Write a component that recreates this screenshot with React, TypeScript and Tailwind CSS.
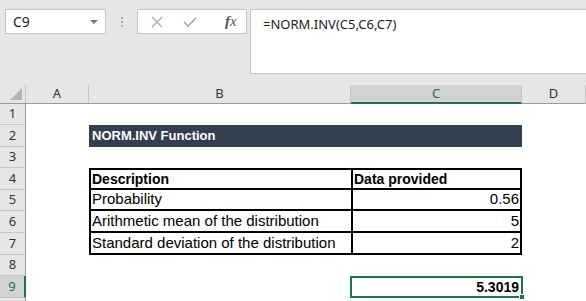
import React from "react";

const cellFont = { fontFamily: '"Liberation Sans", Arial, sans-serif' };

function RowHead({ n, active }: { n?: number; active?: boolean }) {
  return (
    <div
      className={
        active
          ? "w-[26px] shrink-0 flex items-center justify-center bg-[#d2d2d2] text-[#217346] border-b border-[#c6c6c6] border-r-2 border-r-[#217346] text-[13px]"
          : "w-[26px] shrink-0 flex items-center justify-center bg-[#e6e6e6] text-[#333] border-b border-[#c6c6c6] border-r border-r-[#9b9b9b] text-[13px]"
      }
      style={{ fontFamily: '"Noto Sans", sans-serif' }}
    >
      {n}
    </div>
  );
}

export default function App() {
  return (
    <div className="w-[586px] h-[301px] overflow-hidden bg-white" style={cellFont}>
      {/* formula bar area */}
      <div className="h-[85px] bg-[#e6e6e6] flex items-start pt-[9px] pl-[5px]">
        <div className="w-[101px] h-[25px] bg-white border border-[#c6c6c6] flex items-center justify-between pl-[7px] pr-[7px]">
          <span className="text-[14px] text-[#222]" style={{ fontFamily: '"Noto Sans", sans-serif' }}>
            C9
          </span>
          <span className="w-0 h-0 border-l-[4px] border-r-[4px] border-t-[4px] border-l-transparent border-r-transparent border-t-[#777]" />
        </div>
        <div className="w-[31px] h-[25px] flex flex-col items-center justify-center gap-[2px]">
          <span className="w-[2px] h-[2px] bg-[#aaa]" />
          <span className="w-[2px] h-[2px] bg-[#aaa]" />
          <span className="w-[2px] h-[2px] bg-[#aaa]" />
        </div>
        <div className="w-[110px] h-[25px] bg-white border border-[#c6c6c6] flex items-center pl-[13px] gap-[20px]">
          <svg width="12" height="12" viewBox="0 0 12 12">
            <path d="M1 1 L11 11 M11 1 L1 11" stroke="#a6a6a6" strokeWidth="1.3" fill="none" />
          </svg>
          <svg width="14" height="12" viewBox="0 0 14 12">
            <path d="M1 6 L5 10 L13 2" stroke="#a6a6a6" strokeWidth="1.6" fill="none" />
          </svg>
          <span
            className="text-[15px] italic text-[#555] ml-[8px] leading-none"
            style={{ fontFamily: '"Liberation Serif", serif' }}
          >
            <span className="font-bold">f</span>x
          </span>
        </div>
        <div className="ml-[3px] flex-1 h-[65px] bg-white border border-r-0 border-[#c6c6c6] pl-[12px] pt-[2px]">
          <span className="text-[13px] text-[#222]" style={{ fontFamily: '"Noto Sans", sans-serif' }}>
            =NORM.INV(C5,C6,C7)
          </span>
        </div>
      </div>

      {/* column headers */}
      <div
        className="flex h-[19px] bg-[#e6e6e6] border-b border-[#9b9b9b] text-[13px] text-[#333]"
        style={{ fontFamily: '"Noto Sans", sans-serif' }}
      >
        <div className="w-[26px] border-r border-[#c6c6c6] relative">
          <svg className="absolute left-[10px] top-[3px]" width="12" height="12" viewBox="0 0 12 12">
            <path d="M12 0 L12 12 L0 12 Z" fill="#b4b4b4" />
          </svg>
        </div>
        <div className="w-[63px] border-r border-[#c6c6c6] flex items-center justify-center">A</div>
        <div className="w-[262px] border-r border-[#c6c6c6] flex items-center justify-center">B</div>
        <div className="w-[171px] -mb-px bg-[#d2d2d2] border-r border-[#c6c6c6] border-b-2 border-b-[#217346] flex items-center justify-center text-[#217346]">
          C
        </div>
        <div className="w-[64px] border-r border-[#c6c6c6] flex items-center justify-center">D</div>
      </div>

      {/* row 1 */}
      <div className="flex h-[21px]">
        <RowHead n={1} />
      </div>

      {/* row 2 title */}
      <div className="flex h-[22px]">
        <RowHead n={2} />
        <div className="w-[63px]" />
        <div className="w-[433px] bg-[#333f4f] text-white font-bold text-[13px] flex items-center pl-[3px]">
          NORM.INV Function
        </div>
      </div>

      {/* row 3 */}
      <div className="flex h-[21px]">
        <RowHead n={3} />
      </div>

      {/* table rows */}
      <div className="flex h-[22px]">
        <RowHead n={4} />
        <div className="w-[63px]" />
        <div className="w-[262px] border-t-2 border-l-2 border-b-2 border-black flex items-center pl-[1px] font-bold text-[14px] text-black">
          Description
        </div>
        <div className="w-[171px] border-2 border-black flex items-center pl-[1px] font-bold text-[14px] text-black">
          Data provided
        </div>
      </div>
      {[
        { n: 5, h: "h-[21px]", label: "Probability", value: "0.56" },
        { n: 6, h: "h-[22px]", label: "Arithmetic mean of the distribution", value: "5" },
        { n: 7, h: "h-[22px]", label: "Standard deviation of the distribution", value: "2" },
      ].map((r) => (
        <div key={r.n} className={`flex ${r.h}`}>
          <RowHead n={r.n} />
          <div className="w-[63px]" />
          <div className="w-[262px] border-l-2 border-b-2 border-black flex items-center pl-[1px] text-[15px] text-black">
            {r.label}
          </div>
          <div className="w-[171px] border-l-2 border-r-2 border-b-2 border-black flex items-center justify-end pr-[1px] text-[15px] text-black">
            {r.value}
          </div>
        </div>
      ))}

      {/* row 8 */}
      <div className="flex h-[21px]">
        <RowHead n={8} />
      </div>

      {/* row 9 result */}
      <div className="flex h-[22px]">
        <RowHead n={9} active />
        <div className="w-[63px]" />
        <div className="w-[261px]" />
        <div className="w-[173px] relative border-2 border-[#217346] flex items-center justify-end pr-[2px] font-bold text-[14px] text-black">
          5.3019
          <span className="absolute -right-[4px] -bottom-[4px] w-[6px] h-[6px] bg-[#217346] border border-white" />
        </div>
      </div>

      {/* row 10, cut off by the window */}
      <div className="flex h-[21px]">
        <RowHead />
      </div>
    </div>
  );
}
